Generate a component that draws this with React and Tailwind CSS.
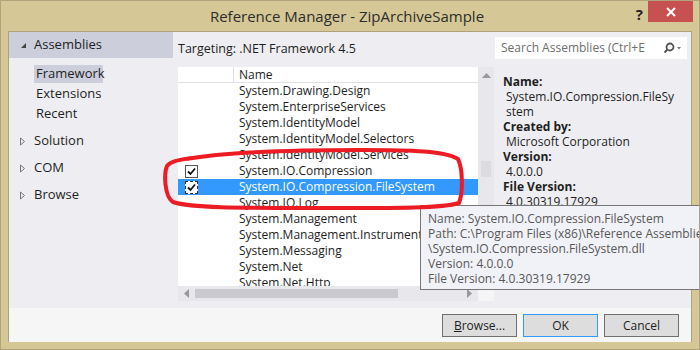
import React from 'react';

const rows = [
  'System.Drawing.Design',
  'System.EnterpriseServices',
  'System.IdentityModel',
  'System.IdentityModel.Selectors',
  'System.IdentityModel.Services',
  'System.IO.Compression',
  'System.IO.Compression.FileSystem',
  'System.IO.Log',
  'System.Management',
  'System.Management.Instrumentation',
  'System.Messaging',
  'System.Net',
  'System.Net.Http',
];

function Check({ selected }) {
  return (
    <span
      className={
        'w-[13px] h-[13px] border flex items-center justify-center ' +
        (selected ? 'border-dashed border-[#333] bg-white' : 'border-[#555] bg-white')
      }
    >
      <svg width="9" height="9" viewBox="0 0 9 9">
        <path d="M1 4.5 L3.5 7 L8 1.5" stroke="#111" strokeWidth="1.8" fill="none" />
      </svg>
    </span>
  );
}

function Tri({ open }) {
  return open ? (
    <svg width="7" height="7" viewBox="0 0 7 7"><path d="M6 1 L6 6 L1 6 Z" fill="#444" /></svg>
  ) : (
    <svg width="7" height="9" viewBox="0 0 7 9"><path d="M1.5 1 L5.5 4.5 L1.5 8 Z" fill="none" stroke="#777" /></svg>
  );
}

export default function App() {
  return (
    <div className="relative w-[700px] h-[350px] overflow-hidden bg-[#d6c896] border border-[#b2a47a] font-['Segoe_UI','Open_Sans',sans-serif] text-[12px] text-[#1e1e1e]">
      {/* title bar */}
      <div className="h-[30px] flex items-center relative">
        <div className="flex-1 text-center text-[15px] text-[#2d2d2d] pr-[6px]">Reference Manager - ZipArchiveSample</div>
        <div className="absolute right-[56px] top-[2px] text-[15px] font-bold text-[#222]">?</div>
        <div className="absolute right-[6px] top-0 w-[45px] h-[21px] bg-[#c75050] flex items-center justify-center">
          <svg width="10" height="10" viewBox="0 0 10 10"><path d="M1 1 L9 9 M9 1 L1 9" stroke="#fff" strokeWidth="2" /></svg>
        </div>
      </div>

      {/* content */}
      <div className="ml-[7px] mr-[7px] h-[311px] flex flex-col border-l border-t border-r border-[#b0a278]">
        <div className="h-[276px] flex bg-[#eeeef2]">
          {/* left nav */}
          <div className="w-[164px] flex flex-col">
            <div className="h-[26px] bg-[#cccedb] flex items-center pl-[11px] gap-[7px] text-[13px]">
              <Tri open />
              <span>Assemblies</span>
            </div>
            <div className="flex flex-col pl-[25px] mt-[7px] gap-[1px]">
              <div className="h-[18px] w-[69px] bg-[#cccedb] flex items-center pl-[2px] text-[13px]">Framework</div>
              <div className="h-[19px] flex items-center pl-[2px] text-[13px]">Extensions</div>
              <div className="h-[19px] flex items-center pl-[2px] text-[13px]">Recent</div>
            </div>
            <div className="flex flex-col pl-[10px] mt-[9px] text-[13px]">
              <div className="h-[18px] flex items-center gap-[8px]"><Tri /><span>Solution</span></div>
              <div className="h-[18px] mt-[9px] flex items-center gap-[8px]"><Tri /><span>COM</span></div>
              <div className="h-[18px] mt-[9px] flex items-center gap-[8px]"><Tri /><span>Browse</span></div>
            </div>
          </div>

          {/* main */}
          <div className="flex-1 flex flex-col">
            <div className="h-[35px] flex items-start justify-between pt-[5px]">
              <div className="pl-[5px] pt-[3px] text-[12.5px] text-[#1e1e1e]">Targeting: .NET Framework 4.5</div>
              <div className="w-[192px] h-[22px] bg-white mr-[4px] flex items-center pl-[6px] pr-[4px] text-[#6d6d6d]">
                <span className="flex-1 whitespace-nowrap overflow-hidden">Search Assemblies (Ctrl+E</span>
                <svg width="20" height="12" viewBox="0 0 20 12">
                  <circle cx="7" cy="5" r="3.5" fill="none" stroke="#555" strokeWidth="1.8" />
                  <path d="M4.5 7.5 L1.5 10.5" stroke="#555" strokeWidth="2" />
                  <path d="M14 5 L18 5 L16 7.5 Z" fill="#777" />
                </svg>
              </div>
            </div>

            <div className="flex flex-1">
              {/* list */}
              <div className="w-[316px] ml-[5px] h-[234px] flex flex-col">
                <div className="flex h-[219px]">
                  <div className="w-[300px] bg-white flex flex-col overflow-hidden">
                    <div className="h-[16px] flex border-b border-[#e0e0e6] shrink-0">
                      <div className="w-[56px] border-r border-[#e0e0e6]" />
                      <div className="pl-[5px] leading-[15px]">Name</div>
                    </div>
                    {rows.map((r, i) => {
                      const sel = i === 6;
                      const checked = i === 5 || i === 6;
                      return (
                        <div
                          key={r}
                          className={'h-[16px] shrink-0 flex items-center ' + (sel ? 'bg-[#3399ff] text-white' : '')}
                        >
                          <div className="w-[56px] pl-[7px] flex items-center">{checked && <Check selected={sel} />}</div>
                          <div className="pl-[5px] whitespace-nowrap">{r}</div>
                        </div>
                      );
                    })}
                  </div>
                  <div className="w-[16px] bg-[#e8e8ec] flex flex-col items-center pt-[6px]">
                    <svg width="9" height="5" viewBox="0 0 9 5"><path d="M0 5 L4.5 0 L9 5 Z" fill="#999" /></svg>
                    <div className="w-[10px] h-[16px] bg-[#dcdce0] mt-[83px]" />
                  </div>
                </div>
                <div className="flex h-[15px]">
                  <div className="w-[300px] bg-[#e8e8ec] flex items-center px-[6px]">
                    <svg width="5" height="9" viewBox="0 0 5 9"><path d="M5 0 L0 4.5 L5 9 Z" fill="#999" /></svg>
                    <div className="w-[203px] h-[9px] bg-[#c9c9cf] ml-[6px]" />
                    <div className="flex-1" />
                    <svg width="5" height="9" viewBox="0 0 5 9"><path d="M0 0 L5 4.5 L0 9 Z" fill="#999" /></svg>
                  </div>
                  <div className="w-[16px] bg-[#f5f5f5]" />
                </div>
              </div>

              {/* details */}
              <div className="flex-1 pl-[9px] pt-[7px] leading-[15px]">
                <div className="font-bold">Name:</div>
                <div className="pl-[3px] break-all w-[173px]">System.IO.Compression.FileSystem</div>
                <div className="font-bold">Created by:</div>
                <div className="pl-[3px]">Microsoft Corporation</div>
                <div className="font-bold">Version:</div>
                <div className="pl-[3px]">4.0.0.0</div>
                <div className="font-bold">File Version:</div>
                <div className="pl-[3px]">4.0.30319.17929</div>
              </div>
            </div>
          </div>
        </div>

        {/* bottom buttons */}
        <div className="flex-1 bg-[#f6f6f6] flex items-start justify-end pt-[6px] pr-[12px] gap-[6px]">
          <button className="w-[75px] h-[23px] bg-[#dddddd] border border-[#707070] text-[12px]"><span className="underline">B</span>rowse...</button>
          <button className="w-[75px] h-[23px] bg-[#dddddd] border border-[#3399ff] text-[12px]">OK</button>
          <button className="w-[75px] h-[23px] bg-[#dddddd] border border-[#707070] text-[12px]">Cancel</button>
        </div>
      </div>

      {/* tooltip */}
      <div className="absolute left-[419px] top-[204px] w-[300px] h-[85px] bg-[#f1f2f7] border border-[#767676] text-[#575757] pl-[7px] pt-[5px] leading-[15px] whitespace-nowrap">
        <div>Name: System.IO.Compression.FileSystem</div>
        <div>Path: C:\Program Files (x86)\Reference Assemblies\Microsoft</div>
        <div>\System.IO.Compression.FileSystem.dll</div>
        <div>Version: 4.0.0.0</div>
        <div>File Version: 4.0.30319.17929</div>
      </div>

      {/* red annotation */}
      <svg className="absolute left-0 top-0 pointer-events-none" width="700" height="350">
        <path
          d="M185 158 C230 150 300 149 360 149 C410 149 445 150 457 158 C462 168 462 192 458 202 C440 208 380 207 300 207 C240 207 190 207 172 201 C163 195 163 172 166 165 C170 160 178 159 190 157"
          fill="none"
          stroke="#ed1c24"
          strokeWidth="4"
        />
      </svg>
    </div>
  );
}
